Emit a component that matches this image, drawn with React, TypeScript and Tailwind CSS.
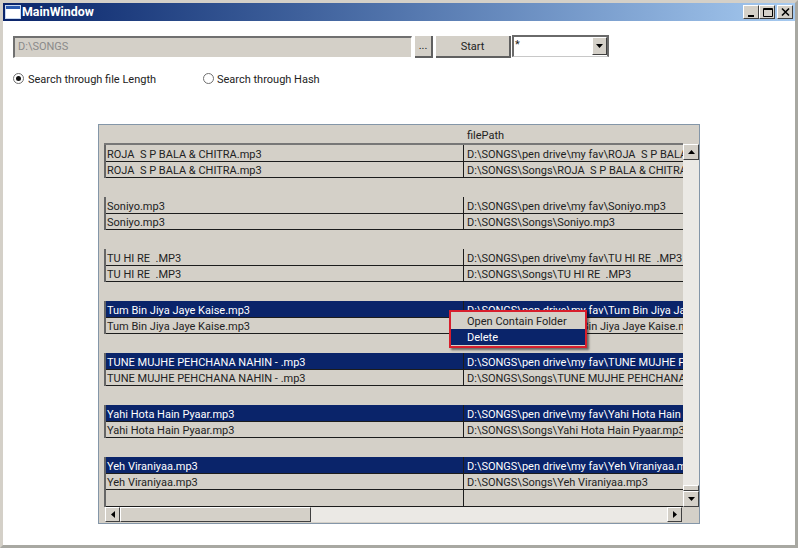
import React from "react";

const font = { fontFamily: 'Roboto,"Liberation Sans",Arial,sans-serif' };

const groups: { name: string; p1: string; p2: string; sel?: boolean }[] = [
  { name: "ROJA  S P BALA & CHITRA.mp3", p1: "D:\\SONGS\\pen drive\\my fav\\ROJA  S P BALA & CHITRA.mp3", p2: "D:\\SONGS\\Songs\\ROJA  S P BALA & CHITRA.mp3" },
  { name: "Soniyo.mp3", p1: "D:\\SONGS\\pen drive\\my fav\\Soniyo.mp3", p2: "D:\\SONGS\\Songs\\Soniyo.mp3" },
  { name: "TU HI RE  .MP3", p1: "D:\\SONGS\\pen drive\\my fav\\TU HI RE  .MP3", p2: "D:\\SONGS\\Songs\\TU HI RE  .MP3" },
  { name: "Tum Bin Jiya Jaye Kaise.mp3", p1: "D:\\SONGS\\pen drive\\my fav\\Tum Bin Jiya Jaye Kaise.mp3", p2: "D:\\SONGS\\Songs\\Tum Bin Jiya Jaye Kaise.mp3", sel: true },
  { name: "TUNE MUJHE PEHCHANA NAHIN - .mp3", p1: "D:\\SONGS\\pen drive\\my fav\\TUNE MUJHE PEHCHANA NAHIN - .mp3", p2: "D:\\SONGS\\Songs\\TUNE MUJHE PEHCHANA NAHIN - .mp3", sel: true },
  { name: "Yahi Hota Hain Pyaar.mp3", p1: "D:\\SONGS\\pen drive\\my fav\\Yahi Hota Hain Pyaar.mp3", p2: "D:\\SONGS\\Songs\\Yahi Hota Hain Pyaar.mp3", sel: true },
  { name: "Yeh Viraniyaa.mp3", p1: "D:\\SONGS\\pen drive\\my fav\\Yeh Viraniyaa.mp3", p2: "D:\\SONGS\\Songs\\Yeh Viraniyaa.mp3", sel: true },
];

function Row({ a, b, sel, second }: { a: string; b: string; sel?: boolean; second?: boolean }) {
  return (
    <div className={`flex border-b border-[#1c1c1c] text-[11px] whitespace-pre overflow-hidden ${second ? "h-[16px] leading-[18px]" : "h-[17px] leading-[20px]"} ${sel ? "bg-[#0a246a] text-white" : "text-[#222]"}`}>
      <div className="w-[358px] shrink-0 border-r border-[#1c1c1c] pl-[1px] overflow-hidden">{a}</div>
      <div className="flex-1 pl-[3px] overflow-hidden">{b}</div>
    </div>
  );
}

function SbBtn({ children, className = "" }: { children: React.ReactNode; className?: string }) {
  return (
    <div className={`flex items-center justify-center bg-[#d4d0c8] border border-t-white border-l-white border-r-[#404040] border-b-[#404040] shrink-0 ${className}`}>
      {children}
    </div>
  );
}

const Up = () => <svg width="7" height="4"><path d="M3.5 0L7 4H0z" fill="#000" /></svg>;
const Down = () => <svg width="7" height="4"><path d="M0 0h7L3.5 4z" fill="#000" /></svg>;
const Left = () => <svg width="4" height="7"><path d="M4 0v7L0 3.5z" fill="#000" /></svg>;
const Right = () => <svg width="4" height="7"><path d="M0 0v7l4-3.5z" fill="#000" /></svg>;

export default function App() {
  return (
    <div style={font} className="w-[798px] h-[548px] bg-white border-[3px] border-[#d4d0c8] border-r-[#a8a8a2] border-b-[#a8a8a2] flex flex-col overflow-hidden text-[#222]">
      <div className="h-[18px] shrink-0 bg-gradient-to-r from-[#0a246a] to-[#a6caf0] flex items-center pl-[2px] pr-[2px]">
        <svg width="16" height="14" className="shrink-0"><rect x="0.5" y="0.5" width="15" height="13" fill="#fff" stroke="#c8d8f0" /><rect x="1" y="1" width="14" height="3" fill="#2a5ab0" /></svg>
        <span className="ml-[1px] text-white font-bold text-[12.4px] leading-[18px]">MainWindow</span>
        <div className="ml-auto flex items-center">
          {[
            <path key="m" d="M3 9h6v2H3z" fill="#000" />,
            <path key="x" d="M2.5 2.5h9v8h-9zM2.5 3.5h9" fill="none" stroke="#000" />,
            <path key="c" d="M3 2.5l7 7M10 2.5l-7 7" fill="none" stroke="#000" strokeWidth="1.6" />,
          ].map((p, i) => (
            <div key={i} className={`w-[16px] h-[14px] bg-[#d4d0c8] border border-t-white border-l-white border-r-[#404040] border-b-[#404040] flex items-center justify-center ${i === 2 ? "ml-[2px]" : ""}`}>
              <svg width="13" height="12">{p}</svg>
            </div>
          ))}
        </div>
      </div>

      <div className="flex-1 flex flex-col pl-[10px] pt-[15px]">
        <div className="flex items-start h-[23px]">
          <div className="w-[399px] h-[22px] bg-[#d4d0c8] border-t-2 border-l-2 border-t-[#707070] border-l-[#707070] border-b border-r border-b-white border-r-white pl-[3px] text-[#8a8a8a] text-[11px] leading-[18px]">D:\SONGS</div>
          <div className="ml-[3px] w-[18px] h-[22px] bg-[#d4d0c8] border-r-2 border-b-2 border-r-[#606060] border-b-[#606060] flex items-center justify-center text-[11px]">...</div>
          <div className="ml-[3px] w-[75px] h-[22px] pt-[3px] bg-[#d4d0c8] border-r-2 border-b-2 border-r-[#606060] border-b-[#606060] flex items-center justify-center text-[11px]">Start</div>
          <div className="ml-[1px] w-[97px] h-[22px] -mt-[1px] bg-white border-t-2 border-l-2 border-r-2 border-[#6a6a6a] border-b border-b-[#c8c8c8] flex">
            <span className="flex-1 pl-[1px] text-[11px] leading-[15px]">*</span>
            <SbBtn className="w-[15px] h-[18px] border-l-[#d4d0c8]"><Down /></SbBtn>
          </div>
        </div>

        <div className="flex items-center h-[16px] mt-[12px] text-[11px] leading-[16px]">
          <div className="w-[11px] h-[11px] -mt-[2px] rounded-full border border-[#707070] bg-white flex items-center justify-center"><div className="w-[5px] h-[5px] rounded-full bg-[#111]" /></div>
          <span className="ml-[4px] w-[175px] pt-[2px]">Search through file Length</span>
          <div className="w-[11px] h-[11px] -mt-[2px] rounded-full border border-[#707070] bg-white" />
          <span className="ml-[3px] pt-[2px]">Search through Hash</span>
        </div>

        <div className="relative mt-[37px] ml-[85px] w-[602px] h-[400px] border border-[#8496a8] bg-[#d4d0c8] flex flex-col">
          <div className="flex flex-1 min-h-0 pl-[5px]">
            <div className="flex-1 flex flex-col min-w-0">
              <div className="h-[20px] shrink-0 border-b-2 border-[#777] flex text-[11px] leading-[20px] overflow-hidden">
                <div className="w-[360px] shrink-0" />
                <div className="pl-[3px] pt-[1px]">filePath</div>
              </div>
              <div className="flex-1 overflow-hidden">
                {groups.map((g, i) => (
                  <div key={i} className={i === groups.length - 1 ? "" : "h-[52px]"}>
                    <div className="border-l-2 border-[#666]">
                      <Row a={g.name} b={g.p1} sel={g.sel} />
                      <Row a={g.name} b={g.p2} second />
                      {i === groups.length - 1 && <Row a="" b="" />}
                    </div>
                  </div>
                ))}
              </div>
            </div>
            <div className="w-[16px] mt-[19px] flex flex-col bg-[#ebe9e5]">
              <SbBtn className="h-[16px]"><Up /></SbBtn>
              <div className="flex-1" />
              <div className="h-[6px] bg-[#d4d0c8] border border-t-white border-l-white border-r-[#404040] border-b-[#404040]" />
              <SbBtn className="h-[16px]"><Down /></SbBtn>
            </div>
          </div>
          <div className="h-[15px] shrink-0 flex pl-[6px] mb-[1px]">
            <div className="w-[577px] flex bg-[#ebe9e5]">
              <SbBtn className="w-[15px]"><Left /></SbBtn>
              <div className="w-[191px] bg-[#d4d0c8] border border-t-white border-l-white border-r-[#404040] border-b-[#404040]" />
              <div className="flex-1" />
              <SbBtn className="w-[15px]"><Right /></SbBtn>
            </div>
          </div>

          <div className="absolute left-[350px] top-[185px] w-[138px] h-[38px] border-2 border-[#d81e2c] bg-[#d4d0c8] shadow-[2px_2px_2px_rgba(0,0,0,0.5)] text-[11px] flex flex-col justify-end pb-[1px]">
            <div className="h-[17px] pl-[16px] leading-[19px] overflow-hidden">Open Contain Folder</div>
            <div className="h-[16px] pl-[16px] leading-[18px] overflow-hidden bg-[#0a246a] text-white">Delete</div>
          </div>
        </div>
      </div>
    </div>
  );
}
